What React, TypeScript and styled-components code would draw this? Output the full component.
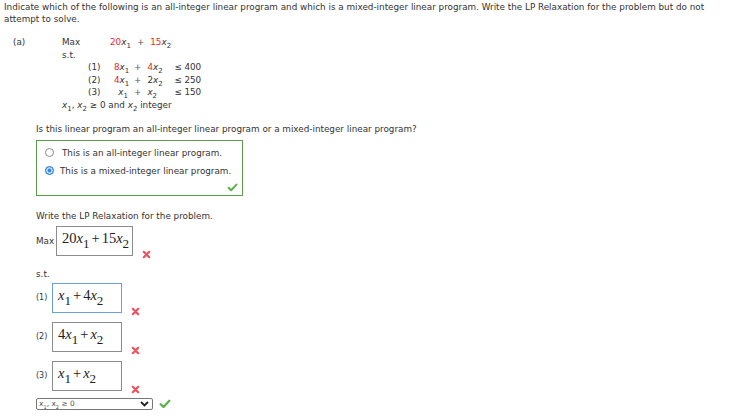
import React from 'react';
import styled, { createGlobalStyle } from 'styled-components';

const GlobalStyle = createGlobalStyle`
  html, body {
    margin: 0;
    padding: 0;
    background: #ffffff;
  }
  body {
    font-family: 'DejaVu Sans', Verdana, sans-serif;
    font-size: 8.8px;
    color: #333333;
  }
`;

const Page = styled.div`
  width: 733px;
  height: 418px;
  overflow: hidden;
  padding: 1px 0 0 4px;
  box-sizing: border-box;
`;

const Intro = styled.p`
  margin: 0;
  line-height: 12px;
  width: 715px;
`;

const PartRow = styled.div`
  display: flex;
  margin-top: 11px;
`;

const PartLabel = styled.div`
  width: 58px;
  padding-left: 9px;
  box-sizing: border-box;
  line-height: 12px;
`;

const Model = styled.div`
  display: flex;
  flex-direction: column;
`;

const ModelLine = styled.div<{ $indent?: number; $height?: number }>`
  display: flex;
  align-items: baseline;
  height: ${({ $height }) => $height ?? 12.5}px;
  line-height: 12px;
  padding-left: ${({ $indent }) => $indent ?? 0}px;
  white-space: nowrap;
`;

const Cell = styled.span<{ $w: number; $align?: string }>`
  display: inline-block;
  width: ${({ $w }) => $w}px;
  text-align: ${({ $align }) => $align ?? 'left'};
  white-space: nowrap;
`;

const Red = styled.span`
  color: #f0242c;
`;

const Var = styled.i`
  font-style: italic;
`;

const Sub = styled.sub<{ $size?: number }>`
  font-size: ${({ $size }) => $size ?? 7}px;
  vertical-align: -3px;
  line-height: 0;
`;

const Op = styled.span`
  padding: 0 6px;
  color: #555;
`;

const Section = styled.div`
  padding-left: 32px;
`;

const Question = styled.p`
  margin: 10px 0 0;
  line-height: 12px;
`;

const ChoiceBox = styled.div`
  position: relative;
  width: 207px;
  height: 56px;
  margin-top: 5px;
  border: 1px solid #5d9a4a;
  box-sizing: border-box;
  padding: 6px 0 0 8px;
`;

const Choice = styled.label`
  display: flex;
  align-items: center;
  height: 12px;
  margin-bottom: 6px;
`;

const Radio = styled.span<{ $checked?: boolean }>`
  width: 7px;
  height: 7px;
  border-radius: 50%;
  border: 1px solid ${({ $checked }) => ($checked ? '#2f7de1' : '#8a8a8a')};
  background: ${({ $checked }) => ($checked ? '#2f8cf0' : '#fff')};
  box-shadow: ${({ $checked }) => ($checked ? 'inset 0 0 0 1.5px #cfe3fb' : 'none')};
  margin-right: ${({ $checked }) => ($checked ? 6 : 8)}px;
`;

const CornerMark = styled.span`
  position: absolute;
  right: 4px;
  bottom: 3px;
  display: flex;
`;

const SubHead = styled.p`
  margin: 14px 0 0;
  line-height: 12px;
`;

const AnswerRow = styled.div<{ $top: number }>`
  display: flex;
  align-items: center;
  margin-top: ${({ $top }) => $top}px;
`;

const RowLabel = styled.span<{ $w: number; $small?: boolean }>`
  width: ${({ $w }) => $w}px;
  font-size: ${({ $small }) => ($small ? '8px' : 'inherit')};
`;

const MathBox = styled.div<{ $w: number; $focus?: boolean }>`
  width: ${({ $w }) => $w}px;
  height: 30px;
  box-sizing: border-box;
  border: 1px solid ${({ $focus }) => ($focus ? '#6aa0d8' : '#8c8c8c')};
  padding: 2px 0 0 5px;
  font-family: 'Liberation Serif', 'Times New Roman', serif;
  font-size: 14.5px;
  color: #222;
  line-height: 18px;
  white-space: nowrap;
  overflow: hidden;
`;

const MVar = styled.i`
  font-style: italic;
`;

const MSub = styled.sub`
  font-size: 13px;
  vertical-align: -5px;
  line-height: 0;
`;

const MOp = styled.span`
  padding: 0 2px;
`;

const Mark = styled.span<{ $center?: boolean }>`
  align-self: ${({ $center }) => ($center ? 'center' : 'flex-end')};
  margin: ${({ $center }) => ($center ? '0 0 0 6px' : '0 0 -3px 9px')};
  display: flex;
`;

const StLabel = styled.p`
  margin: 12px 0 0;
  line-height: 12px;
`;

const SelectRow = styled.div`
  display: flex;
  align-items: center;
  margin-top: 7px;
`;

const Select = styled.div`
  width: 117px;
  height: 12px;
  box-sizing: border-box;
  border: 1px solid #777;
  border-radius: 2px;
  display: flex;
  align-items: center;
  justify-content: space-between;
  padding: 0 3px 0 2px;
  font-size: 7.5px;
  line-height: 9px;
  color: #555;
`;

const Cross = () => (
  <svg width="9" height="9" viewBox="0 0 10 10">
    <path d="M2 2 L8 8 M8 2 L2 8" stroke="#f0505e" strokeWidth="2.4" strokeLinecap="round" />
  </svg>
);

const Check = ({ size = 12 }: { size?: number }) => (
  <svg width={size} height={size * 0.8} viewBox="0 0 12 10">
    <path
      d="M1.5 5.5 L4.5 8.3 L10.5 1.8"
      stroke="#5cb04a"
      strokeWidth="2.3"
      fill="none"
      strokeLinecap="round"
      strokeLinejoin="round"
    />
  </svg>
);

const Chevron = () => (
  <svg width="9" height="6" viewBox="0 0 9 6">
    <path d="M1 1 L4.5 4.5 L8 1" stroke="#222" strokeWidth="1.8" fill="none" />
  </svg>
);

const X = ({ n }: { n: number }) => (
  <>
    <Var>x</Var>
    <Sub>{n}</Sub>
  </>
);

const MX = ({ n }: { n: number }) => (
  <>
    <MVar>x</MVar>
    <MSub>{n}</MSub>
  </>
);

const constraints = [
  { label: '(1)', a: '8', b: '4', bRed: true, rhs: '400' },
  { label: '(2)', a: '4', b: '2', bRed: false, rhs: '250' },
  { label: '(3)', a: '', b: '', bRed: false, rhs: '150' },
];

const answers = [
  { label: '(1)', focus: true, body: <><MX n={1} /><MOp>+</MOp>4<MX n={2} /></> },
  { label: '(2)', focus: false, body: <>4<MX n={1} /><MOp>+</MOp><MX n={2} /></> },
  { label: '(3)', focus: false, body: <><MX n={1} /><MOp>+</MOp><MX n={2} /></> },
];

export default function App() {
  return (
    <>
      <GlobalStyle />
      <Page>
        <Intro>
          Indicate which of the following is an all-integer linear program and which is a mixed-integer linear
          program. Write the LP Relaxation for the problem but do not attempt to solve.
        </Intro>

        <PartRow>
          <PartLabel>(a)</PartLabel>
          <Model>
            <ModelLine>
              <Cell $w={48}>Max</Cell>
              <span>
                <Red>20</Red>
                <X n={1} />
                <Op>+</Op>
                <Red>15</Red>
                <X n={2} />
              </span>
            </ModelLine>
            <ModelLine>s.t.</ModelLine>
            {constraints.map((c) => (
              <ModelLine key={c.label} $indent={26}>
                <Cell $w={26}>{c.label}</Cell>
                <Cell $w={14} $align="right">
                  <Red>{c.a}</Red>
                  <X n={1} />
                </Cell>
                <Op>+</Op>
                <Cell $w={27}>
                  {c.bRed ? <Red>{c.b}</Red> : c.b}
                  <X n={2} />
                </Cell>
                <Cell $w={10}>≤</Cell>
                <span>{c.rhs}</span>
              </ModelLine>
            ))}
            <ModelLine $indent={-2} $height={14}>
              <span>
                <X n={1} />, <X n={2} /> ≥ 0 and <X n={2} /> integer
              </span>
            </ModelLine>
          </Model>
        </PartRow>

        <Section>
          <Question>
            Is this linear program an all-integer linear program or a mixed-integer linear program?
          </Question>
          <ChoiceBox>
            <Choice>
              <Radio />
              This is an all-integer linear program.
            </Choice>
            <Choice>
              <Radio $checked />
              This is a mixed-integer linear program.
            </Choice>
            <CornerMark>
              <Check size={11} />
            </CornerMark>
          </ChoiceBox>

          <SubHead>Write the LP Relaxation for the problem.</SubHead>

          <AnswerRow $top={4}>
            <RowLabel $w={20}>Max</RowLabel>
            <MathBox $w={77}>
              20<MX n={1} />
              <MOp>+</MOp>15<MX n={2} />
            </MathBox>
            <Mark>
              <Cross />
            </Mark>
          </AnswerRow>

          <StLabel>s.t.</StLabel>

          {answers.map((a, i) => (
            <AnswerRow key={a.label} $top={i === 0 ? 3 : 9}>
              <RowLabel $w={16} $small>
                {a.label}
              </RowLabel>
              <MathBox $w={70} $focus={a.focus}>
                {a.body}
              </MathBox>
              <Mark>
                <Cross />
              </Mark>
            </AnswerRow>
          ))}

          <SelectRow>
            <Select>
              <span>
                x<Sub $size={5}>1</Sub>, x<Sub $size={5}>2</Sub> ≥ 0
              </span>
              <Chevron />
            </Select>
            <Mark $center>
              <Check size={12} />
            </Mark>
          </SelectRow>
        </Section>
      </Page>
    </>
  );
}
